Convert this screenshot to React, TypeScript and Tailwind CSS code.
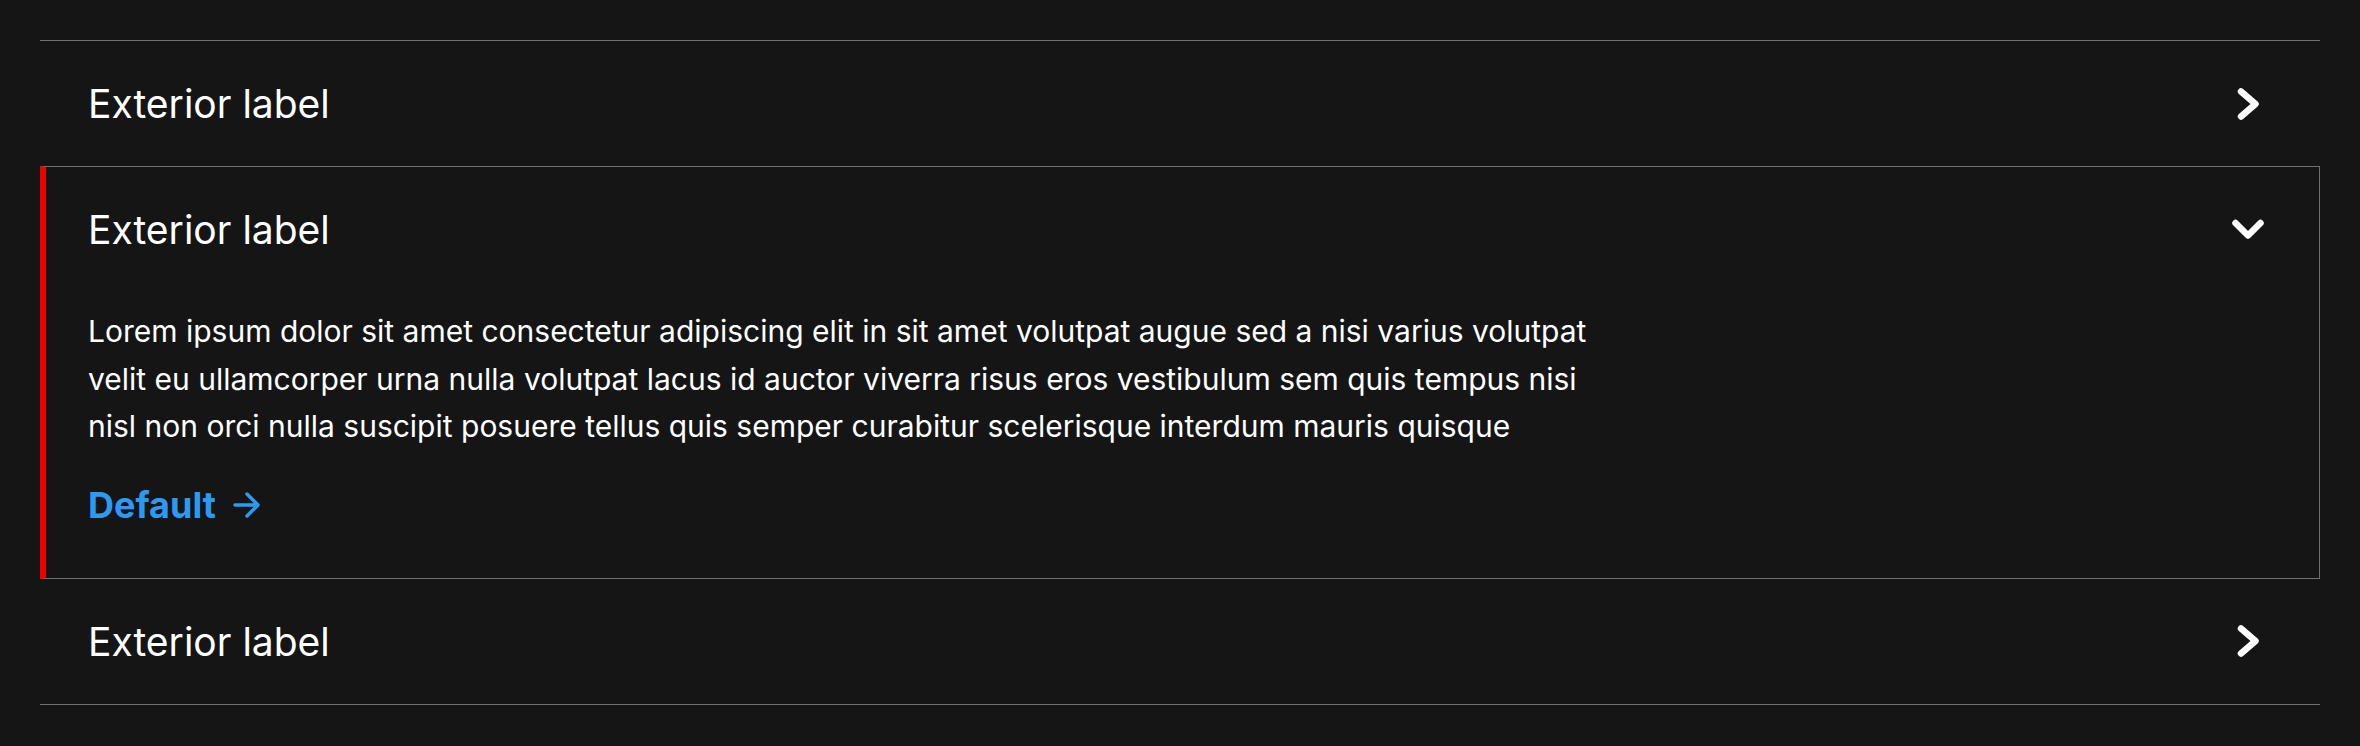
import React from 'react'

const font = { fontFamily: 'Inter, "Noto Sans", sans-serif' }

function ChevronRight() {
  return (
    <svg width="32" height="32" viewBox="0 0 32 32" className="shrink-0">
      <path d="M9 3.5 L23.5 16 L9 28.5" fill="none" stroke="#fff" strokeWidth="6.5" strokeLinecap="round" strokeLinejoin="round" />
    </svg>
  )
}

function ChevronDown() {
  return (
    <svg width="32" height="32" viewBox="0 0 32 32" className="shrink-0">
      <path d="M3.5 9 L16 21.5 L28.5 9" fill="none" stroke="#fff" strokeWidth="6.5" strokeLinecap="round" strokeLinejoin="round" />
    </svg>
  )
}

function Header({ open }: { open?: boolean }) {
  return (
    <div className="flex h-[125px] items-center justify-between">
      <span className="text-[39px] leading-none text-white">Exterior label</span>
      {open ? <ChevronDown /> : <ChevronRight />}
    </div>
  )
}

export default function App() {
  return (
    <div className="min-h-[746px] w-full bg-[#151515] px-10 pt-10" style={font}>
      {/* closed row */}
      <div className="border-t border-[#707070] pl-12 pr-14">
        <Header />
      </div>

      {/* expanded row */}
      <div className="border border-[#707070] border-l-[6px] border-l-[#ee0000] pl-[42px] pr-[55px] pb-[53px]">
        <Header open />
        <p className="pt-4 text-[30px] leading-[47.5px] text-white">
          <span className="block">Lorem ipsum dolor sit amet consectetur adipiscing elit in sit amet volutpat augue sed a nisi varius volutpat</span>
          <span className="block">velit eu ullamcorper urna nulla volutpat lacus id auctor viverra risus eros vestibulum sem quis tempus nisi</span>
          <span className="block">nisl non orci nulla suscipit posuere tellus quis semper curabitur scelerisque interdum mauris quisque</span>
        </p>
        <a href="#" className="mt-[34px] flex items-center gap-4 text-[36px] font-bold leading-[40px] text-[#2b9af3]">
          Default
          <svg width="30" height="28" viewBox="0 0 30 28">
            <path d="M3 14 H26 M15 3 L26 14 L15 25" fill="none" stroke="#2b9af3" strokeWidth="3.5" strokeLinecap="round" strokeLinejoin="round" />
          </svg>
        </a>
      </div>

      {/* closed row */}
      <div className="border-b border-[#707070] pl-12 pr-14">
        <Header />
      </div>
    </div>
  )
}
